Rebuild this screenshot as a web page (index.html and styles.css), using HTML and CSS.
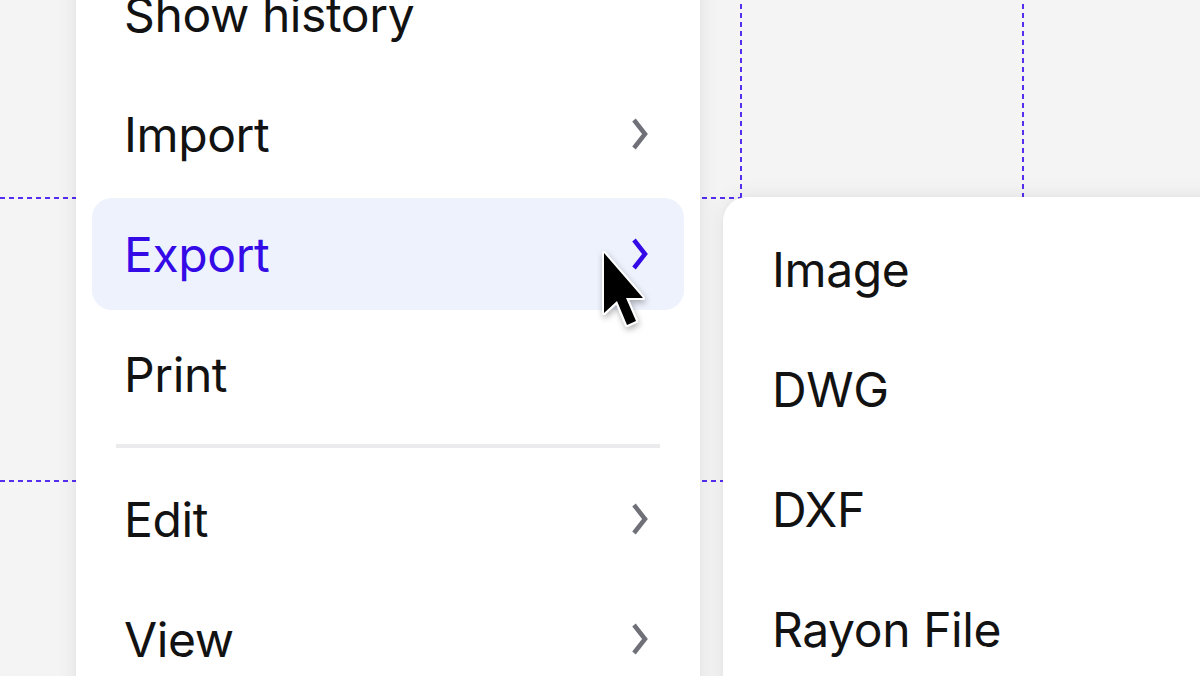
FILE: index.html
```html
<!DOCTYPE html>
<html lang="en">
<head>
<meta charset="utf-8">
<title>Menu</title>
<link rel="stylesheet" href="styles.css">
</head>
<body>
<div class="canvas">
  <div class="guide h h1"></div>
  <div class="guide h h2"></div>
  <div class="guide v v1"></div>
  <div class="guide v v2"></div>

  <div class="menu main-menu">
    <div class="item"><span>Show history</span></div>
    <div class="item"><span>Import</span>
      <svg class="chev" viewBox="0 0 20 34"><path d="M4 3 L15 17 L4 31"/></svg></div>
    <div class="item active"><span>Export</span>
      <svg class="chev" viewBox="0 0 20 34"><path d="M4 3 L15 17 L4 31"/></svg></div>
    <div class="item"><span>Print</span></div>
    <div class="divider"></div>
    <div class="item"><span>Edit</span>
      <svg class="chev" viewBox="0 0 20 34"><path d="M4 3 L15 17 L4 31"/></svg></div>
    <div class="item"><span>View</span>
      <svg class="chev" viewBox="0 0 20 34"><path d="M4 3 L15 17 L4 31"/></svg></div>
  </div>

  <div class="menu sub-menu">
    <div class="item"><span>Image</span></div>
    <div class="item"><span>DWG</span></div>
    <div class="item"><span>DXF</span></div>
    <div class="item"><span>Rayon File</span></div>
  </div>

  <svg class="cursor" viewBox="0 0 56 90" width="56" height="90">
    <defs>
      <filter id="sh" x="-30%" y="-30%" width="160%" height="160%">
        <feDropShadow dx="1" dy="3" stdDeviation="3" flood-color="#000" flood-opacity="0.3"/>
      </filter>
    </defs>
    <path filter="url(#sh)" d="M7 7 L7 67 L20 55 L30 79 L39 75 L29 52 L46 52 Z" fill="#000" stroke="#fff" stroke-width="4" stroke-linejoin="round" paint-order="stroke"/>
  </svg>
</div>
</body>
</html>
```

FILE: styles.css
```css
* { box-sizing: border-box; }
html, body {
  margin: 0;
  padding: 0;
  background: #f4f4f4;
  overflow: hidden;
}
.canvas {
  position: relative;
  width: 1200px;
  height: 676px;
  overflow: hidden;
  font-family: "Inter", "Liberation Sans", sans-serif;
}
.guide { position: absolute; }
.guide.h {
  height: 2px;
  background: repeating-linear-gradient(to right, #4318ee 0 5px, transparent 5px 9px);
  opacity: 0.9;
}
.guide.v {
  width: 2px;
  background: repeating-linear-gradient(to bottom, #4318ee 0 5px, transparent 5px 9px);
  opacity: 0.9;
}
.h1 { left: 0; top: 197px; width: 742px; }
.h2 { left: 0; top: 480px; width: 724px; }
.v1 { left: 740px; top: 4px; height: 194px; }
.v2 { left: 1022px; top: 4px; height: 193px; }

.menu {
  position: absolute;
  background: #fff;
  padding: 16px;
  display: flex;
  flex-direction: column;
  gap: 8px;
  box-shadow: 0 0 22px rgba(0, 0, 0, 0.08), 0 0 4px rgba(0, 0, 0, 0.03);
}
.main-menu {
  left: 76px;
  top: -58px;
  width: 624px;
  height: 820px;
  border-radius: 24px;
}
.sub-menu {
  left: 723px;
  top: 197px;
  width: 560px;
  height: 560px;
  border-radius: 24px;
}
.item {
  height: 112px;
  flex: none;
  display: flex;
  align-items: center;
  justify-content: space-between;
  padding: 0 34px 0 32px;
  border-radius: 20px;
  font-size: 48px;
  color: #121212;
  letter-spacing: -0.4px;
}
.sub-menu .item { padding-left: 33px; }
.item.active {
  background: #eef2fd;
  color: #340ae6;
}
.chev {
  width: 20px;
  height: 34px;
  fill: none;
  stroke: #707078;
  stroke-width: 4.5;
  stroke-linecap: butt;
  stroke-linejoin: miter;
}
.item.active .chev { stroke: #340ae6; }
.divider {
  flex: none;
  height: 4px;
  margin: 6px 24px 7px;
  background: #ebebed;
}
.cursor {
  position: absolute;
  left: 597px;
  top: 246px;
}
```
